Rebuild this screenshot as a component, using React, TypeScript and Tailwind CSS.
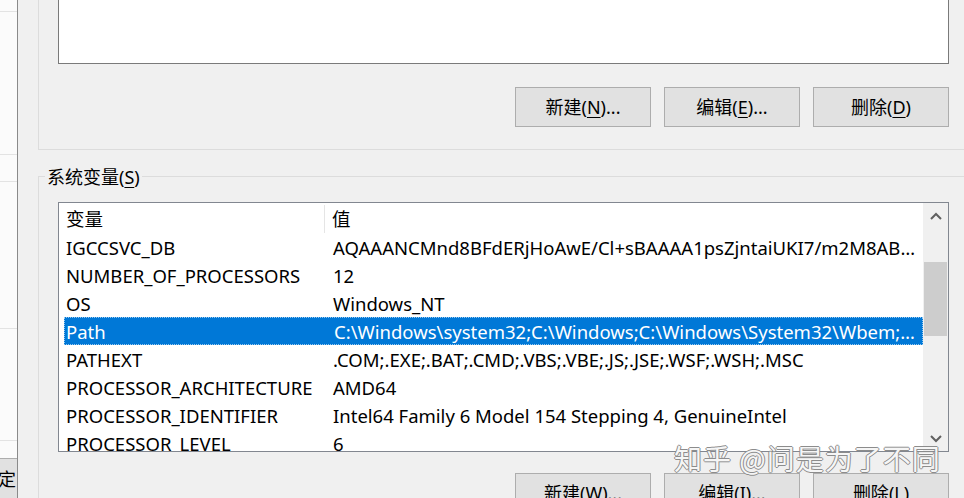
import React from 'react';

const FONT = { fontFamily: '"Noto Sans", "Noto Sans CJK SC", sans-serif' };

interface EnvVar {
  name: string;
  value: string;
}

const vars: EnvVar[] = [
  { name: 'IGCCSVC_DB', value: 'AQAAANCMnd8BFdERjHoAwE/Cl+sBAAAA1psZjntaiUKI7/m2M8ABPwQAAAACAAAAAAAQZgAAAAEAACAAAA' },
  { name: 'NUMBER_OF_PROCESSORS', value: '12' },
  { name: 'OS', value: 'Windows_NT' },
  { name: 'Path', value: 'C:\\Windows\\system32;C:\\Windows;C:\\Windows\\System32\\Wbem;C:\\Windows\\System32\\WindowsPowerShell\\v1.0\\' },
  { name: 'PATHEXT', value: '.COM;.EXE;.BAT;.CMD;.VBS;.VBE;.JS;.JSE;.WSF;.WSH;.MSC' },
  { name: 'PROCESSOR_ARCHITECTURE', value: 'AMD64' },
  { name: 'PROCESSOR_IDENTIFIER', value: 'Intel64 Family 6 Model 154 Stepping 4, GenuineIntel' },
  { name: 'PROCESSOR_LEVEL', value: '6' },
];

function WinButton({ label, mnemonic, suffix }: { label: string; mnemonic: string; suffix: string }) {
  return (
    <button className="flex h-[40px] w-[136px] items-center justify-center border border-[#adadad] bg-[#e1e1e1] pt-px text-[18px] text-black">
      {label}(<span className="underline underline-offset-[3px]">{mnemonic}</span>){suffix}
    </button>
  );
}

function Chevron({ up }: { up?: boolean }) {
  return (
    <svg width="12" height="8" viewBox="0 0 12 8" className="text-[#606060]">
      <polyline
        points={up ? '1,7 6,2 11,7' : '1,1 6,6 11,1'}
        fill="none"
        stroke="currentColor"
        strokeWidth="2"
      />
    </svg>
  );
}

export default function App() {
  return (
    <div className="relative flex h-[498px] w-[964px] overflow-hidden bg-[#f0f0f0] text-black" style={FONT}>
      {/* left window behind */}
      <div className="flex w-[18px] shrink-0 flex-col border-r border-[#8a8a8a] bg-[#fbfbfb]">
        <div className="h-[12px] border-b border-[#e3e3e3]" />
        <div className="h-[144px] border-b border-[#e3e3e3]" />
        <div className="h-[27px] border-b border-[#e3e3e3]" />
        <div className="h-[147px] border-b border-[#e3e3e3]" />
        <div className="h-[113px] border-b border-[#e3e3e3]" />
        <div className="h-[17px]" />
        <div className="flex h-[40px] items-center justify-end overflow-hidden border-t border-[#adadad] bg-[#e1e1e1] text-[18px] leading-none">
          <span className="whitespace-nowrap pr-px">确定</span>
        </div>
      </div>

      {/* dialog */}
      <div className="flex min-w-0 flex-1 flex-col pl-[20px]">
        {/* user variables group (cut off at top) */}
        <div className="border-b border-l border-[#dcdcdc] pb-[22px]">
          <div className="ml-[19px] mr-[15px] h-[64px] border-x border-b border-[#7a7a7a] bg-white" />
          <div className="mr-[15px] mt-[23px] flex justify-end gap-[13px]">
            <WinButton label="新建" mnemonic="N" suffix="..." />
            <WinButton label="编辑" mnemonic="E" suffix="..." />
            <WinButton label="删除" mnemonic="D" suffix="" />
          </div>
        </div>

        {/* system variables group */}
        <div className="relative mt-[26px] min-w-0 flex-1 border-l border-t border-[#dcdcdc]">
          <span className="absolute left-[6px] top-[-13px] bg-[#f0f0f0] px-[2px] text-[18px] leading-[26px]">
            系统变量(<span className="underline underline-offset-[3px]">S</span>)
          </span>

          <div className="ml-[19px] mr-[15px] mt-[25px] flex h-[250px] min-w-0 border border-[#828790] bg-white">
            <div className="min-w-0 flex-1 overflow-hidden text-[18.5px]">
              <div className="flex h-[30px] items-center pt-[2px]">
                <div className="flex h-full w-[266px] shrink-0 items-center border-r border-[#e5e5e5] pl-[7px]">变量</div>
                <div className="pl-[7px]">值</div>
              </div>
              {vars.map((v) => {
                const selected = v.name === 'Path';
                return (
                  <div
                    key={v.name}
                    className={`ml-[5px] flex h-[28px] items-center pt-[2px] ${
                      selected ? 'border border-dotted border-[#99c9ef] bg-[#0078d7] text-white' : ''
                    }`}
                  >
                    <div className={`w-[267px] shrink-0 whitespace-nowrap ${selected ? 'pl-px' : 'pl-[2px]'}`}>{v.name}</div>
                    <div className="min-w-0 flex-1 truncate pl-[2px] pr-[6px]">{v.value}</div>
                  </div>
                );
              })}
            </div>

            {/* scrollbar */}
            <div className="flex w-[25px] shrink-0 flex-col bg-[#f0f0f0]">
              <div className="flex h-[25px] items-center justify-center">
                <Chevron up />
              </div>
              <div className="mx-px mt-[34px] h-[74px] bg-[#cdcdcd]" />
              <div className="flex-1" />
              <div className="flex h-[25px] items-center justify-center">
                <Chevron />
              </div>
            </div>
          </div>

          <div className="mr-[15px] mt-[21px] flex justify-end gap-[13px]">
            <WinButton label="新建" mnemonic="W" suffix="..." />
            <WinButton label="编辑" mnemonic="I" suffix="..." />
            <WinButton label="删除" mnemonic="L" suffix="" />
          </div>
        </div>
      </div>

      {/* watermark */}
      <div
        className="absolute left-[674px] top-[440px] whitespace-nowrap text-[28px] leading-[36px] tracking-[1px] text-[#f6f6f6] [text-shadow:1px_0_#8c8c8c,-1px_0_#8c8c8c,0_1px_#8c8c8c,0_-1px_#8c8c8c]"
        style={{ fontFamily: '"Noto Sans CJK SC", sans-serif' }}
      >
        知乎 @问是为了不同
      </div>
    </div>
  );
}
